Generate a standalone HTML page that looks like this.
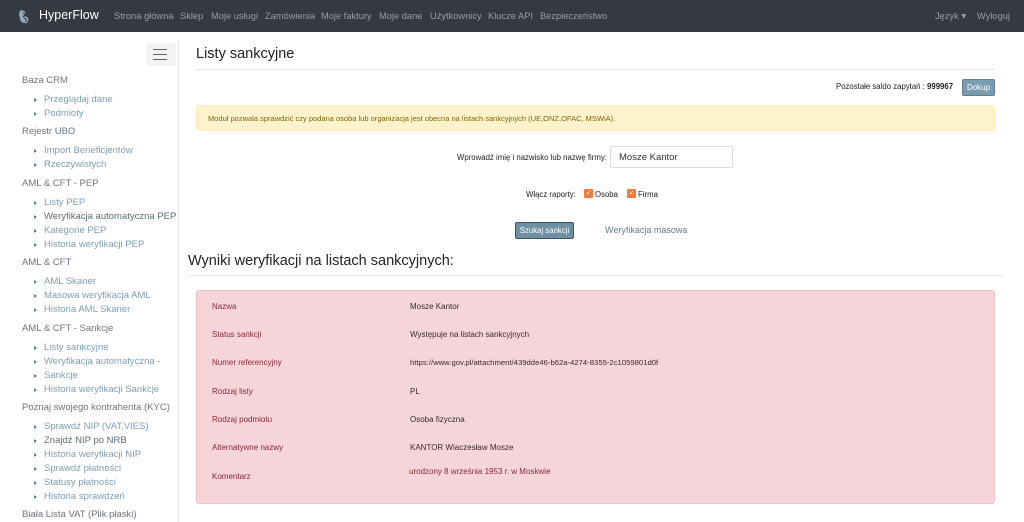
<!DOCTYPE html>
<html><head><meta charset="utf-8"><style>
*{box-sizing:border-box;margin:0;padding:0}
body{width:1024px;height:522px;overflow:hidden;background:#fff;font-family:"Liberation Sans",sans-serif;position:relative}
.a{position:absolute;white-space:nowrap}
.nav{position:absolute;left:0;top:0;width:1024px;height:32px;background:#343a40}
.nl{font-size:9.3px;color:#9a9da0;top:11px}
.sh{font-size:9.5px;color:#6c757d;left:22px}
.sl{font-size:9.5px;color:#7d9fb3;left:44px}
.sl:before{content:"";position:absolute;left:-10px;top:4px;border-left:3px solid #5a7d93;border-top:2.5px solid transparent;border-bottom:2.5px solid transparent}
.lab{font-size:8px;color:#8a2a35;left:212px}
.val{font-size:8px;color:#3a2a2c;left:410px}
</style></head><body>
<div class="nav"></div>
<svg class="a" style="left:17px;top:8px" width="16" height="17" viewBox="0 0 16 17"><path d="M4 2 C9 3 10 6 6 8 C11 8 13 11 10 15 C6 16 2 13 3 9 C1 7 2 4 4 2Z" fill="#8fa6bb"/><path d="M6 5 C9 6 8 8 6 9 M7 10 C10 11 10 13 8 14" stroke="#343a40" stroke-width="1" fill="none"/></svg>
<div class="a" style="left:39px;top:8px;font-size:12.5px;color:#fff">HyperFlow</div>
<div class="a nl" style="left:114px">Strona główna</div>
<div class="a nl" style="left:180px">Sklep</div>
<div class="a nl" style="left:211px">Moje usługi</div>
<div class="a nl" style="left:265px">Zamówienia</div>
<div class="a nl" style="left:321px">Moje faktury</div>
<div class="a nl" style="left:379px">Moje dane</div>
<div class="a nl" style="left:430px">Użytkownicy</div>
<div class="a nl" style="left:488px">Klucze API</div>
<div class="a nl" style="left:540px">Bezpieczeństwo</div>
<div class="a nl" style="left:935px">Język ▾</div>
<div class="a nl" style="left:977px">Wyloguj</div>

<div class="a" style="left:178px;top:40px;width:1px;height:482px;background:#e8e8e8"></div>
<div class="a" style="left:146px;top:43px;width:30px;height:23px;background:#f3f3f3;border-radius:3px"></div>
<div class="a" style="left:153px;top:49px;width:14px;height:1px;background:#666;box-shadow:0 5px 0 #666,0 10px 0 #666"></div>

<div class="a sh" style="top:75px">Baza CRM</div>
<div class="a sl" style="top:94px">Przeglądaj dane</div>
<div class="a sl" style="top:108px">Podmioty</div>
<div class="a sh" style="top:126px">Rejestr UBO</div>
<div class="a sl" style="top:145px">Import Beneficjentów</div>
<div class="a sl" style="top:159px;">Rzeczywistych</div>
<div class="a sh" style="top:178px">AML &amp; CFT - PEP</div>
<div class="a sl" style="top:197px">Listy PEP</div>
<div class="a sl" style="top:211px;color:#5a6e7c">Weryfikacja automatyczna PEP</div>
<div class="a sl" style="top:225px">Kategorie PEP</div>
<div class="a sl" style="top:239px">Historia weryfikacji PEP</div>
<div class="a sh" style="top:257px">AML &amp; CFT</div>
<div class="a sl" style="top:276px">AML Skaner</div>
<div class="a sl" style="top:290px">Masowa weryfikacja AML</div>
<div class="a sl" style="top:304px">Historia AML Skaner</div>
<div class="a sh" style="top:323px">AML &amp; CFT - Sankcje</div>
<div class="a sl" style="top:342px">Listy sankcyjne</div>
<div class="a sl" style="top:356px">Weryfikacja automatyczna -</div>
<div class="a sl" style="top:370px">Sankcje</div>
<div class="a sl" style="top:384px">Historia weryfikacji Sankcje</div>
<div class="a sh" style="top:402px">Poznaj swojego kontrahenta (KYC)</div>
<div class="a sl" style="top:421px">Sprawdź NIP (VAT,VIES)</div>
<div class="a sl" style="top:435px;color:#5a6e7c">Znajdź NIP po NRB</div>
<div class="a sl" style="top:449px">Historia weryfikacji NIP</div>
<div class="a sl" style="top:463px">Sprawdź płatności</div>
<div class="a sl" style="top:477px">Statusy płatności</div>
<div class="a sl" style="top:491px">Historia sprawdzeń</div>
<div class="a sh" style="top:509px">Biała Lista VAT (Plik płaski)</div>

<div class="a" style="left:196px;top:46px;font-size:14.5px;color:#222">Listy sankcyjne</div>
<div class="a" style="left:196px;top:69px;width:799px;height:1px;background:#e5e5e5"></div>
<div class="a" style="left:836px;top:82px;font-size:7.8px;color:#222">Pozostałe saldo zapytań : <b>999967</b></div>
<div class="a" style="left:962px;top:79px;width:33px;height:17px;background:#7a9cb0;border:1px solid #5f7f93;border-radius:2px;color:#fff;font-size:8px;text-align:center;line-height:15px">Dokup</div>
<div class="a" style="left:196px;top:105px;width:799px;height:26px;background:#fff3cd;border:1px solid #ffeeba;border-radius:3px;font-size:7.5px;color:#856404;padding:8px 11px">Moduł pozwala sprawdzić czy podana osoba lub organizacja jest obecna na listach sankcyjnych (UE,ONZ,OFAC, MSWiA).</div>
<div class="a" style="left:457px;top:153px;font-size:7.8px;color:#222">Wprowadź imię i nazwisko lub nazwę firmy:</div>
<div class="a" style="left:610px;top:146px;width:123px;height:22px;border:1px solid #ddd;border-radius:2px;font-size:9.5px;color:#333;padding:5px 8px">Mosze Kantor</div>
<div class="a" style="left:526px;top:190px;font-size:7.8px;color:#222">Włącz raporty:</div>
<div class="a" style="left:584px;top:189px;width:9px;height:9px;background:#f07b3f;border-radius:1px;color:#fff;font-size:7px;line-height:9px;text-align:center">✓</div>
<div class="a" style="left:595px;top:190px;font-size:7.8px;color:#222">Osoba</div>
<div class="a" style="left:627px;top:189px;width:9px;height:9px;background:#f07b3f;border-radius:1px;color:#fff;font-size:7px;line-height:9px;text-align:center">✓</div>
<div class="a" style="left:638px;top:190px;font-size:7.8px;color:#222">Firma</div>
<div class="a" style="left:515px;top:222px;width:59px;height:17px;background:#6f8fa3;border:1px solid #3f5566;border-radius:2px;color:#fff;font-size:7.8px;text-align:center;line-height:15px">Szukaj sankcji</div>
<div class="a" style="left:605px;top:225px;font-size:9px;color:#5f7f93">Weryfikacja masowa</div>

<div class="a" style="left:188px;top:253px;font-size:14.5px;color:#222">Wyniki weryfikacji na listach sankcyjnych:</div>
<div class="a" style="left:188px;top:275px;width:815px;height:1px;background:#e5e5e5"></div>
<div class="a" style="left:196px;top:290px;width:799px;height:214px;background:#f5d5d9;border:1px solid #f1c3c9;border-radius:3px"></div>
<div class="a lab" style="top:302px">Nazwa</div><div class="a val" style="top:302px">Mosze Kantor</div>
<div class="a lab" style="top:330px">Status sankcji</div><div class="a val" style="top:330px">Występuje na listach sankcyjnych</div>
<div class="a lab" style="top:358px">Numer referencyjny</div><div class="a val" style="top:358px;font-size:7.7px">https://www.gov.pl/attachment/439dde46-b62a-4274-8355-2c1059801d0f</div>
<div class="a lab" style="top:387px">Rodzaj listy</div><div class="a val" style="top:387px">PL</div>
<div class="a lab" style="top:415px">Rodzaj podmiotu</div><div class="a val" style="top:415px">Osoba fizyczna</div>
<div class="a lab" style="top:443px">Alternatywne nazwy</div><div class="a val" style="top:443px">KANTOR Wiaczesław Mosze</div>
<div class="a lab" style="top:472px">Komentarz</div><div class="a val" style="top:467px;color:#8a2a35;left:409px">urodzony 8 września 1953 r. w Moskwie</div>
</body></html>
